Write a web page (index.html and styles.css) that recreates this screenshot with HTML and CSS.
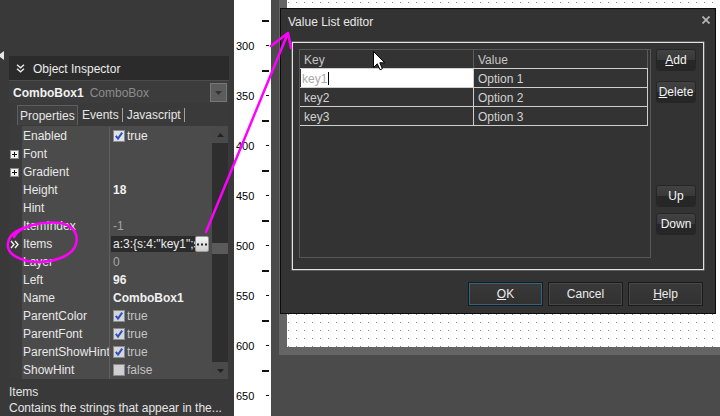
FILE: index.html
```html
<!DOCTYPE html>
<html>
<head>
<meta charset="utf-8">
<title>Value List editor</title>
<link rel="stylesheet" href="styles.css">
</head>
<body>
<div class="app">
  <aside class="left">
    <div class="left-top">
      <svg class="hide-tri" width="4" height="9" viewBox="0 0 4 9"><polygon points="4,0 4,9 -2,4.5" fill="#e6e6e6"/></svg>
    </div>
    <section class="inspector">
      <header class="insp-head">
        <svg width="9" height="9" viewBox="0 0 9 9"><path d="M1 0.8 L4.5 3.8 L8 0.8 M1 4.8 L4.5 7.8 L8 4.8" fill="none" stroke="#ececec" stroke-width="1.4"/></svg>
        <span>Object Inspector</span>
      </header>
      <div class="combo">
        <span class="combo-name">ComboBox1</span>
        <span class="combo-type">ComboBox</span>
        <span class="combo-btn"><svg width="7" height="4" viewBox="0 0 7 4"><polygon points="0,0 7,0 3.5,4" fill="#333"/></svg></span>
      </div>
      <div class="tabs">
        <span class="tab active">Properties</span>
        <span class="tab">Events</span>
        <span class="tab">Javascript</span>
      </div>
      <div class="propgrid">
        <div class="props">
          <div class="row"><span class="gut"></span><span class="pname">Enabled</span><span class="pval bright"><svg class="chk" width="12" height="12" viewBox="0 0 12 12"><rect x="0.5" y="0.5" width="11" height="11" fill="#e2e2e2" stroke="#8a8a8a"/><path d="M2.8 5.8 L5 8.6 L9.2 2.6" fill="none" stroke="#2c4fc7" stroke-width="2"/></svg>true</span></div>
          <div class="row"><span class="gut"><svg width="9" height="9" viewBox="0 0 9 9"><rect x="0.5" y="0.5" width="8" height="8" fill="#f2f2f2" stroke="#8a8a8a"/><path d="M2 4.5 H7 M4.5 2 V7" stroke="#111" stroke-width="1"/></svg></span><span class="pname">Font</span><span class="pval"></span></div>
          <div class="row"><span class="gut"><svg width="9" height="9" viewBox="0 0 9 9"><rect x="0.5" y="0.5" width="8" height="8" fill="#f2f2f2" stroke="#8a8a8a"/><path d="M2 4.5 H7 M4.5 2 V7" stroke="#111" stroke-width="1"/></svg></span><span class="pname">Gradient</span><span class="pval"></span></div>
          <div class="row"><span class="gut"></span><span class="pname">Height</span><span class="pval bold">18</span></div>
          <div class="row"><span class="gut"></span><span class="pname">Hint</span><span class="pval"></span></div>
          <div class="row"><span class="gut"></span><span class="pname">ItemIndex</span><span class="pval dim">-1</span></div>
          <div class="row"><span class="gut"><svg width="9" height="9" viewBox="0 0 9 9"><path d="M1 1 L4 4.5 L1 8 M5 1 L8 4.5 L5 8" fill="none" stroke="#f0f0f0" stroke-width="1.4"/></svg></span><span class="pname">Items</span><span class="pval edit"><span class="editor">a:3:{s:4:"key1";s</span><span class="ell"><svg width="10" height="3" viewBox="0 0 10 3"><rect x="0" y="0.5" width="2" height="2" fill="#222"/><rect x="4" y="0.5" width="2" height="2" fill="#222"/><rect x="8" y="0.5" width="2" height="2" fill="#222"/></svg></span></span></div>
          <div class="row"><span class="gut"></span><span class="pname">Layer</span><span class="pval dim">0</span></div>
          <div class="row"><span class="gut"></span><span class="pname">Left</span><span class="pval bold">96</span></div>
          <div class="row"><span class="gut"></span><span class="pname">Name</span><span class="pval bold">ComboBox1</span></div>
          <div class="row"><span class="gut"></span><span class="pname">ParentColor</span><span class="pval soft"><svg class="chk" width="12" height="12" viewBox="0 0 12 12"><rect x="0.5" y="0.5" width="11" height="11" fill="#d6d6d6" stroke="#8a8a8a"/><path d="M2.8 5.8 L5 8.6 L9.2 2.6" fill="none" stroke="#2c4fc7" stroke-width="2"/></svg>true</span></div>
          <div class="row"><span class="gut"></span><span class="pname">ParentFont</span><span class="pval soft"><svg class="chk" width="12" height="12" viewBox="0 0 12 12"><rect x="0.5" y="0.5" width="11" height="11" fill="#d6d6d6" stroke="#8a8a8a"/><path d="M2.8 5.8 L5 8.6 L9.2 2.6" fill="none" stroke="#2c4fc7" stroke-width="2"/></svg>true</span></div>
          <div class="row"><span class="gut"></span><span class="pname">ParentShowHint</span><span class="pval soft"><svg class="chk" width="12" height="12" viewBox="0 0 12 12"><rect x="0.5" y="0.5" width="11" height="11" fill="#d6d6d6" stroke="#8a8a8a"/><path d="M2.8 5.8 L5 8.6 L9.2 2.6" fill="none" stroke="#2c4fc7" stroke-width="2"/></svg>true</span></div>
          <div class="row"><span class="gut"></span><span class="pname">ShowHint</span><span class="pval soft"><svg class="chk" width="12" height="12" viewBox="0 0 12 12"><rect x="0.5" y="0.5" width="11" height="11" fill="#cfcfcf" stroke="#8a8a8a"/></svg>false</span></div>
        </div>
        <div class="vscroll">
          <span class="sb-btn"><svg width="7" height="4" viewBox="0 0 7 4"><polygon points="0,4 7,4 3.5,0" fill="#222"/></svg></span>
          <span class="sb-track"><span class="sb-thumb"></span></span>
          <span class="sb-btn"><svg width="7" height="4" viewBox="0 0 7 4"><polygon points="0,0 7,0 3.5,4" fill="#222"/></svg></span>
        </div>
      </div>
      <div class="status">
        <div>Items</div>
        <div>Contains the strings that appear in the...</div>
      </div>
    </section>
  </aside>

  <div class="ruler">
    <div class="seg"><span class="tick-long"></span><div class="seg-label"><span>300</span><span class="tick-short"></span></div></div>
    <div class="seg"><span class="tick-long"></span><div class="seg-label"><span>350</span><span class="tick-short"></span></div></div>
    <div class="seg"><span class="tick-long"></span><div class="seg-label"><span>400</span><span class="tick-short"></span></div></div>
    <div class="seg"><span class="tick-long"></span><div class="seg-label"><span>450</span><span class="tick-short"></span></div></div>
    <div class="seg"><span class="tick-long"></span><div class="seg-label"><span>500</span><span class="tick-short"></span></div></div>
    <div class="seg"><span class="tick-long"></span><div class="seg-label"><span>550</span><span class="tick-short"></span></div></div>
    <div class="seg"><span class="tick-long"></span><div class="seg-label"><span>600</span><span class="tick-short"></span></div></div>
    <div class="seg"><span class="tick-long"></span><div class="seg-label"><span>650</span><span class="tick-short"></span></div></div>
  </div>

  <main class="design">
    <div class="form"><div class="canvas"></div></div>

    <div class="dialog">
      <div class="dlg-title">
        <span>Value List editor</span>
        <svg class="dlg-close" width="8" height="8" viewBox="0 0 8 8"><path d="M0.5 0.5 L7.5 7.5 M7.5 0.5 L0.5 7.5" stroke="#b8b8b8" stroke-width="1.7"/></svg>
      </div>
      <div class="dlg-panel">
        <div class="vl-grid">
          <div class="vl-row head"><span class="c key">Key</span><span class="c val">Value</span></div>
          <div class="vl-row"><span class="c key editing"><span class="ed-text">key1</span><span class="caret"></span></span><span class="c val">Option 1</span></div>
          <div class="vl-row"><span class="c key">key2</span><span class="c val">Option 2</span></div>
          <div class="vl-row"><span class="c key">key3</span><span class="c val">Option 3</span></div>
        </div>
        <div class="side-btns">
          <span class="sbtn"><span><u>A</u>dd</span></span>
          <span class="sbtn"><span><u>D</u>elete</span></span>
          <span class="sbtn up">Up</span>
          <span class="sbtn down">Down</span>
        </div>
      </div>
      <div class="dlg-foot">
        <span class="fbtn def"><span><u>O</u>K</span></span>
        <span class="fbtn">Cancel</span>
        <span class="fbtn"><span><u>H</u>elp</span></span>
      </div>
    </div>
  </main>

  <svg class="annot" width="720" height="416" viewBox="0 0 720 416">
    <path d="M14 237 C18 227, 40 221, 60 223 C72 225, 79 233, 76 244 C73 255, 58 261, 40 262 C20 262, 6 254, 8 243 C9 236, 16 230, 27 227" fill="none" stroke="#ff00ff" stroke-width="2.5" stroke-linecap="round"/>
    <path d="M206 232 L288 33 M288 33 L271 46 M288 33 L291 48" fill="none" stroke="#ff00ff" stroke-width="2.5" stroke-linecap="round"/>
  </svg>

  <svg class="cursor" width="13" height="20" viewBox="0 0 13 20">
    <path d="M0.5 0.5 L0.5 16.5 L4.3 12.8 L7 18.8 L9.4 17.8 L6.8 11.8 L11.8 11.8 Z" fill="#ffffff" stroke="#000" stroke-width="1" stroke-linejoin="miter"/>
  </svg>
</div>
</body>
</html>
```
FILE: styles.css
```css
* { box-sizing: border-box; margin: 0; padding: 0; }
html, body { width: 720px; height: 416px; overflow: hidden; }
body {
  background: #393939;
  font-family: "Liberation Sans", Arial, sans-serif;
  font-size: 12px;
  color: #e6e6e6;
}
.app { position: relative; display: flex; width: 720px; height: 416px; overflow: hidden; }

/* ---------- left: object inspector ---------- */
.left { width: 234px; flex: none; display: flex; flex-direction: column; background: #393939; }
.left-top { height: 56px; padding-top: 51px; }
.hide-tri { display: block; }
.inspector { margin-left: 9px; width: 220px; display: flex; flex-direction: column; }
.insp-head {
  height: 24px; background: #2b2b2b;
  display: flex; align-items: center; gap: 8px; padding-left: 7px; padding-top: 1px;
  color: #ececec;
}
.insp-head svg { display: block; }
.combo {
  height: 23px; background: #3c3c3c; border-top: 1px solid #4c4c4c;
  display: flex; align-items: center; padding-left: 4px; padding-top: 1px;
}
.combo-name { font-weight: bold; color: #f2f2f2; }
.combo-type { margin-left: 6px; color: #8c8c8c; }
.combo-btn {
  margin-left: auto; margin-right: 2px; width: 17px; height: 19px;
  background: #5c5c5c; border: 1px solid #767676;
  display: flex; align-items: center; justify-content: center;
}
.tabs { height: 22px; background: #3a3a3a; display: flex; align-items: flex-end; padding-left: 8px; }
.tab {
  align-self: center; height: 14px; line-height: 15px; margin-top: 2px;
  padding: 0 3px 0 4px; border-right: 1px solid #a0a0a0; color: #e6e6e6;
}
.tab.active {
  align-self: flex-end; height: 20px; line-height: 20px; width: 61px; margin-top: 0;
  padding: 0 0 0 2px; border: 1px solid #5e5e5e; border-bottom: none;
  background: #404040;
}
.propgrid { height: 254px; display: flex; padding-top: 1px; background: #3a3a3a; }
.props { width: 203px; padding-top: 1px; background: linear-gradient(to right, #3b3b3b 13px, #4b4b4b 13px); }
.row { display: flex; height: 18px; }
.gut { width: 13px; flex: none; display: flex; align-items: center; justify-content: center; padding-right: 2px; }
.gut svg { display: block; }
.pname { width: 87px; flex: none; padding-left: 1px; line-height: 18px; white-space: nowrap; overflow: hidden; color: #e8e8e8; }
.pval {
  flex: 1; border-left: 1px solid #5f5f5f; padding-left: 3px;
  display: flex; align-items: center; white-space: nowrap; overflow: hidden; color: #d6d6d6;
}
.pval.bright { color: #ececec; }
.pval.bold { font-weight: bold; color: #f0f0f0; }
.pval.dim { color: #a4a4a4; }
.pval.soft { color: #c4c4c4; }
.chk { display: block; flex: none; margin-right: 2px; }
.pval.edit { padding-left: 1px; padding-right: 3px; }
.editor {
  flex: 1; height: 16px; line-height: 16px; background: #2b2b2b; color: #ececec;
  padding-left: 2px; overflow: hidden; white-space: nowrap;
}
.ell {
  width: 14px; height: 16px; flex: none; border: 1px solid #9a9a9a; border-radius: 2px;
  background: linear-gradient(#f6f6f6, #cfcfcf);
  display: flex; align-items: center; justify-content: center;
}
.ell svg { display: block; }
.vscroll { width: 16px; display: flex; flex-direction: column; background: #2e2e2e; }
.sb-btn { height: 17px; background: #4a4a4a; display: flex; align-items: center; justify-content: center; }
.sb-btn svg { display: block; }
.sb-track { flex: 1; padding-top: 100px; }
.sb-thumb { display: block; height: 11px; background: #5a5a5a; }
.status { padding-top: 5px; line-height: 16px; color: #e6e6e6; white-space: nowrap; }

/* ---------- ruler ---------- */
.ruler {
  width: 37px; flex: none; background: #fff; color: #000;
  font-size: 11px; padding-top: 20px; display: flex; flex-direction: column;
}
.seg { height: 50px; flex: none; display: flex; flex-direction: column; }
.tick-long { display: block; width: 7px; height: 2px; background: #111; align-self: flex-end; margin-right: 2px; }
.seg-label { display: flex; align-items: center; height: 13px; margin-top: 17px; padding-left: 2px; }
.tick-short { display: block; margin-left: auto; margin-right: 2px; width: 3px; height: 1px; background: #111; }

/* ---------- design surface ---------- */
.design { flex: 1; position: relative; background: #4b4b4b; }
.form {
  margin-left: 8px; height: 355px;
  border-left: 8px solid #656565; border-bottom: 8px solid #656565;
}
.canvas {
  height: 100%;
  background-color: #fff;
  background-image:
    linear-gradient(to right, transparent 1px, #fff 1px),
    linear-gradient(to bottom, #8c8c8c 1px, transparent 1px);
  background-size: 8px 8px;
  background-position: 1px 2px;
}

/* ---------- dialog ---------- */
.dialog {
  position: absolute; left: 9px; top: 8px; width: 436px; height: 306px;
  background: #333; border: 1px solid #0c0c0c;
  display: flex; flex-direction: column;
}
.dlg-title {
  height: 33px; flex: none; display: flex; align-items: flex-start;
  padding: 6px 5px 0 7px; line-height: 15px; color: #e8e8e8;
}
.dlg-close { display: block; margin-left: auto; margin-top: 1px; margin-right: 0; }
.dlg-panel {
  height: 228px; flex: none; margin: 0 11px;
  border: 1px solid #e2e2e2; box-shadow: 0 0 0 0.5px #8a8a8a;
  display: flex; align-items: flex-start; padding: 6px 7px 0 6px;
}
.vl-grid { width: 352px; height: 209px; flex: none; border: 1px solid #585858; background: #333; }
.vl-row { display: flex; height: 19px; width: 348px; border-bottom: 1px solid #cfcfcf; color: #d2d2d2; }
.vl-row .c { display: flex; align-items: center; padding-left: 4px; padding-top: 1px; height: 18px; white-space: nowrap; }
.vl-row .key { width: 174px; border-right: 1px solid #cfcfcf; }
.vl-row .val { width: 174px; border-right: 1px solid #cfcfcf; }
.vl-row.head { color: #c6c6c6; }
.vl-row.head .key, .vl-row.head .val { border-right-color: #5c5c5c; }
.vl-row .key.editing { background: #fff; margin-left: 1px; width: 173px; padding-left: 1px; }
.ed-text { color: #a8a8a8; }
.caret { display: block; width: 1px; height: 13px; background: #000; margin-left: 1px; }
.side-btns { width: 40px; margin-left: 5px; display: flex; flex-direction: column; }
.sbtn {
  height: 22px; border-radius: 3px; border: 1px solid #262626;
  background: linear-gradient(#424242 0, #393939 50%, #272727 50%, #262626 100%);
  color: #f4f4f4; display: flex; align-items: center; justify-content: center;
}
.sbtn + .sbtn { margin-top: 10px; }
.sbtn.up { margin-top: 82px; }
.sbtn.down { margin-top: 6px; }
.dlg-foot { display: flex; justify-content: flex-end; gap: 5px; margin-top: 12px; padding-right: 12px; }
.fbtn {
  width: 75px; height: 24px; border: 1px solid #1a1a1a;
  background: linear-gradient(#393939, #313131);
  box-shadow: inset 0 0 0 1px #474747;
  color: #ececec; display: flex; align-items: center; justify-content: center;
}
.fbtn.def { box-shadow: inset 0 0 0 1px #2e6580; }

/* ---------- overlays ---------- */
.annot { position: absolute; left: 0; top: 0; pointer-events: none; }
.cursor { position: absolute; left: 373px; top: 51px; pointer-events: none; }
```
